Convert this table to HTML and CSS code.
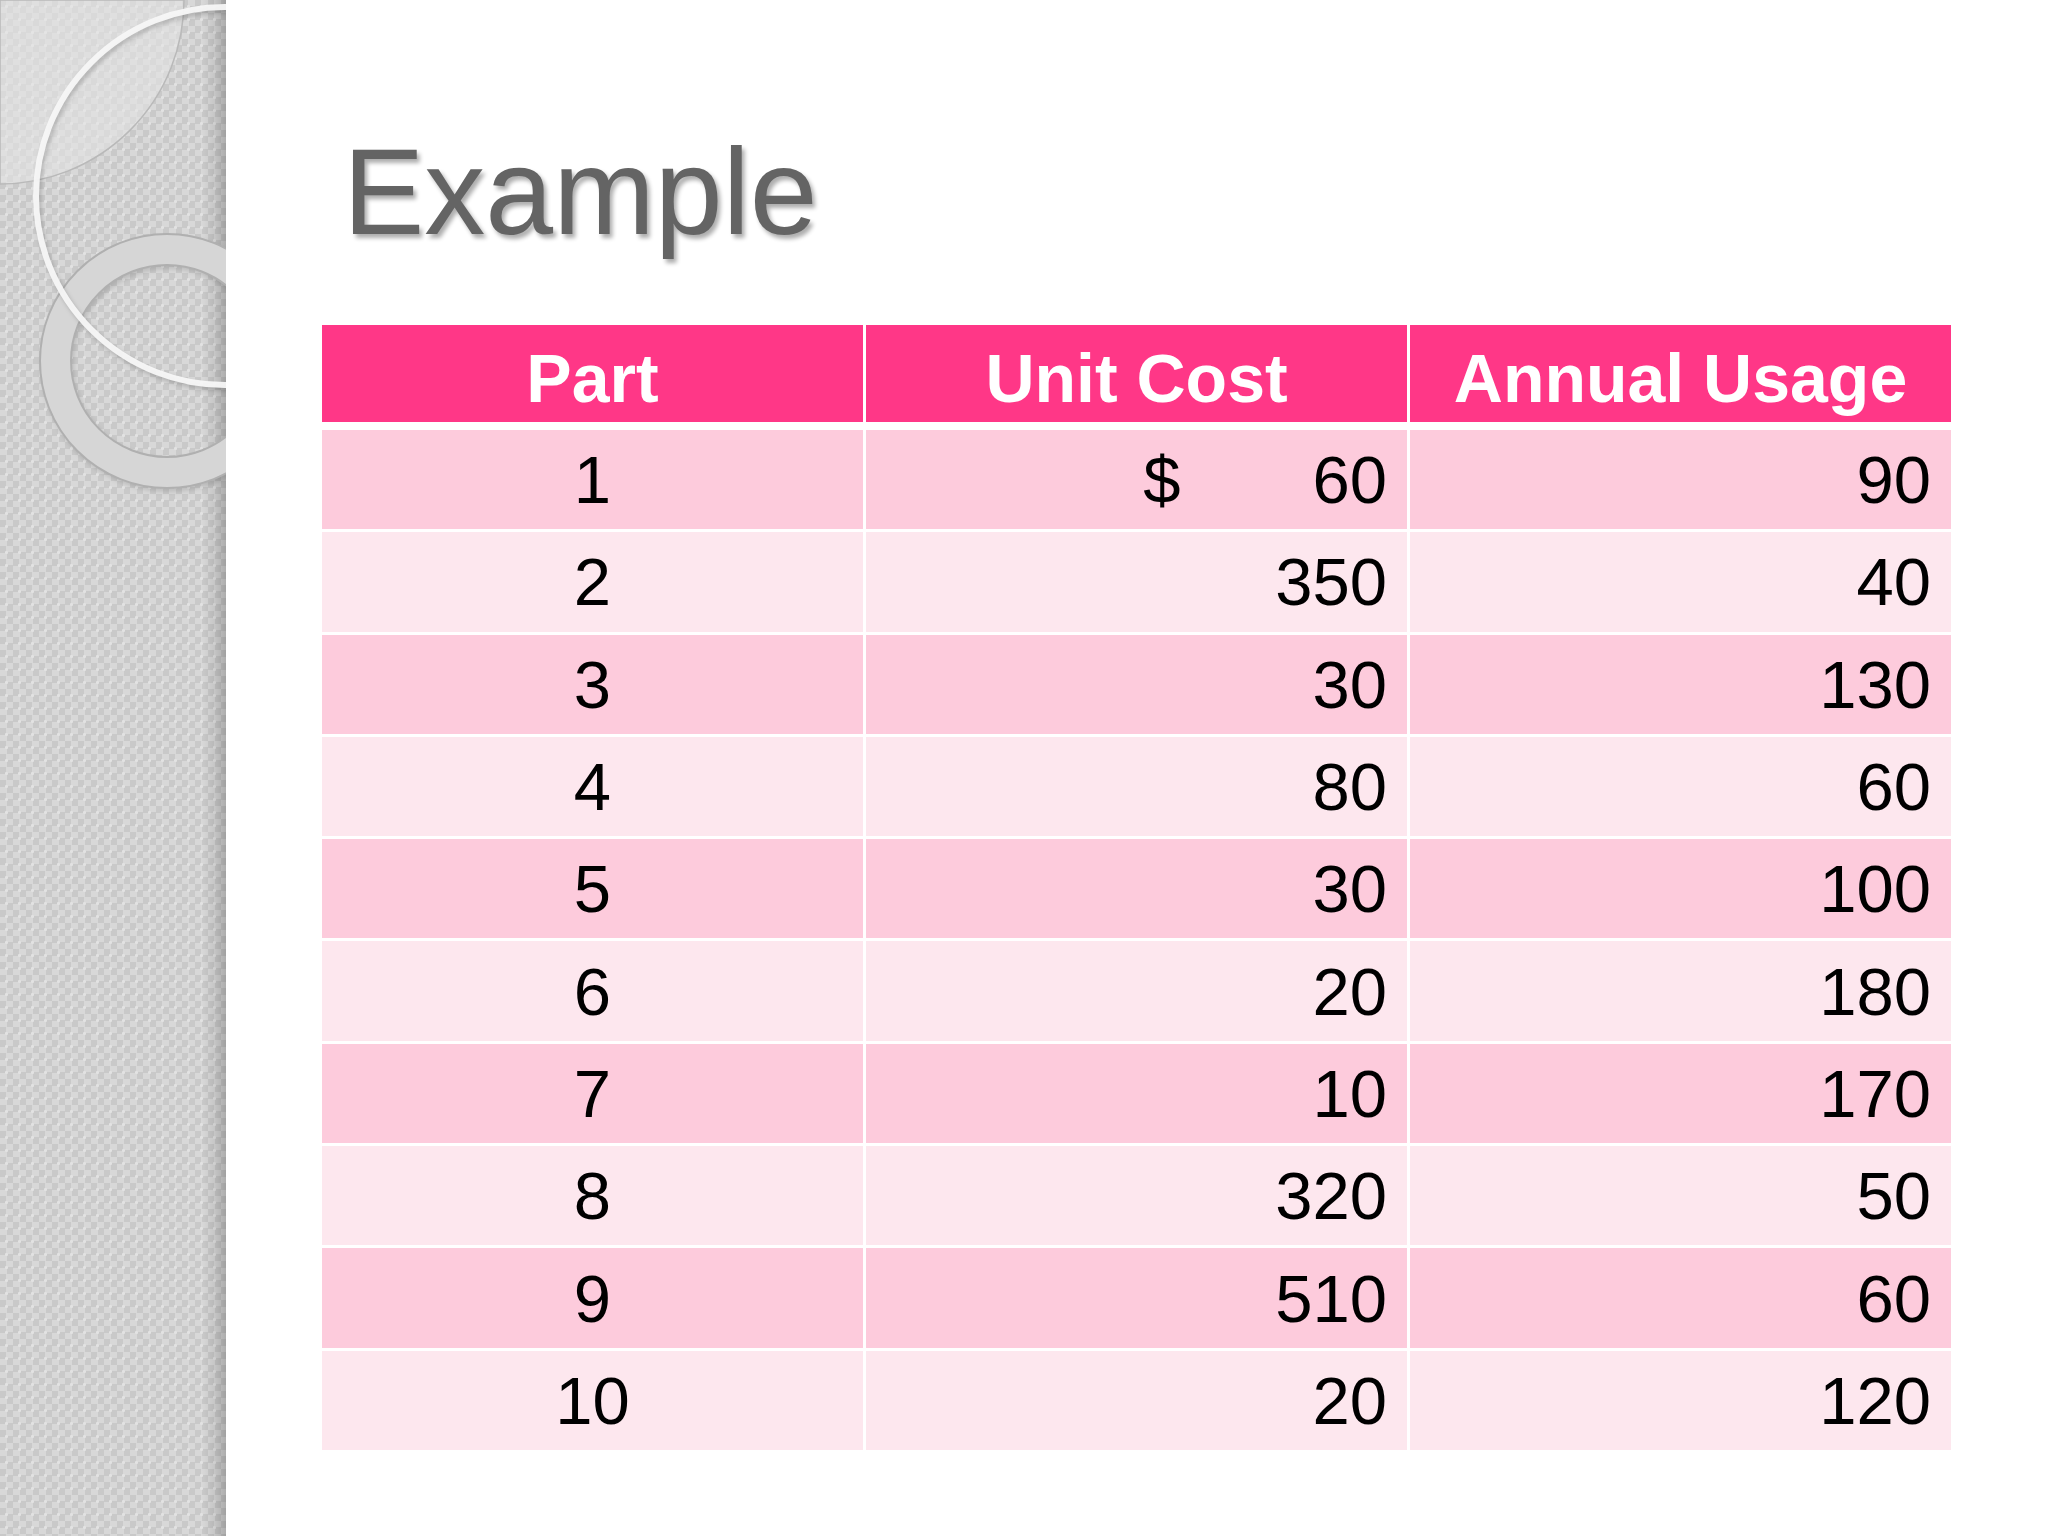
FILE: index.html
```html
<!DOCTYPE html>
<html lang="en">
<head>
<meta charset="utf-8">
<title>Example</title>
<link rel="stylesheet" href="styles.css">
</head>
<body>
<div class="slide">
  <aside class="side">
    <svg class="side-art" width="226" height="560" viewBox="0 0 226 560" aria-hidden="true">
      <defs>
        <filter id="soft" x="-20%" y="-20%" width="140%" height="140%">
          <feGaussianBlur stdDeviation="2"/>
        </filter>
      </defs>
      <path d="M0,0 H184 A184,184 0 0 1 0,184 Z" fill="#e6e6e6" fill-opacity="0.55" stroke="#b9b9b9" stroke-width="1.5"/>
      <circle cx="169" cy="364" r="111.5" fill="none" stroke="#000" stroke-opacity="0.12" stroke-width="33" filter="url(#soft)"/>
      <circle cx="167" cy="361" r="111.5" fill="none" stroke="#d6d6d6" stroke-width="31"/>
      <circle cx="167" cy="361" r="127" fill="none" stroke="#b0b0b0" stroke-width="2"/>
      <circle cx="167" cy="361" r="96" fill="none" stroke="#b0b0b0" stroke-width="2"/>
      <circle cx="227" cy="199" r="189" fill="none" stroke="#000" stroke-opacity="0.18" stroke-width="6" filter="url(#soft)"/>
      <circle cx="225" cy="196" r="189" fill="none" stroke="#f7f7f7" stroke-width="6" stroke-opacity="0.95"/>
    </svg>
  </aside>
  <main class="content">
    <h1 class="title">Example</h1>
    <table class="data">
      <thead>
        <tr><th>Part</th><th>Unit Cost</th><th>Annual Usage</th></tr>
      </thead>
      <tbody>
        <tr><td class="c">1</td><td class="r"><span class="dollar">$</span>60</td><td class="r">90</td></tr>
        <tr><td class="c">2</td><td class="r">350</td><td class="r">40</td></tr>
        <tr><td class="c">3</td><td class="r">30</td><td class="r">130</td></tr>
        <tr><td class="c">4</td><td class="r">80</td><td class="r">60</td></tr>
        <tr><td class="c">5</td><td class="r">30</td><td class="r">100</td></tr>
        <tr><td class="c">6</td><td class="r">20</td><td class="r">180</td></tr>
        <tr><td class="c">7</td><td class="r">10</td><td class="r">170</td></tr>
        <tr><td class="c">8</td><td class="r">320</td><td class="r">50</td></tr>
        <tr><td class="c">9</td><td class="r">510</td><td class="r">60</td></tr>
        <tr><td class="c">10</td><td class="r">20</td><td class="r">120</td></tr>
      </tbody>
    </table>
  </main>
</div>
</body>
</html>
```

FILE: styles.css
```css
html, body {
  margin: 0;
  padding: 0;
  background: #ffffff;
}

.slide {
  width: 2048px;
  height: 1536px;
  display: flex;
  overflow: hidden;
  font-family: "Liberation Sans", Arial, sans-serif;
}

.side {
  position: relative;
  width: 226px;
  flex: 0 0 226px;
  height: 1536px;
  overflow: hidden;
  background-color: #d0d0d0;
  background-image:
    linear-gradient(to right, rgba(0,0,0,0) 202px, rgba(0,0,0,0.07) 213px, rgba(0,0,0,0.2) 226px),
    radial-gradient(circle at 50% 50%, #e2e2e2 0 1.2px, rgba(0,0,0,0) 2px),
    conic-gradient(#d8d8d8 0 25%, #c9c9c9 0 50%, #d8d8d8 0 75%, #c9c9c9 0);
  background-size: 100% 100%, 13px 13px, 13px 13px;
}

.side-art {
  position: absolute;
  left: 0;
  top: 0;
  display: block;
}

.content {
  flex: 1;
  padding-left: 93px;
}

.title {
  margin: 122px 0 0 0;
  padding-left: 24px;
  font-family: "Liberation Sans", Arial, sans-serif;
  font-weight: normal;
  font-size: 122px;
  line-height: 141px;
  height: 141px;
  color: #646464;
  text-shadow: 3px 4px 4px rgba(0,0,0,0.32);
}

.data {
  margin-top: 59px;
  border-collapse: separate;
  border-spacing: 3px;
  table-layout: fixed;
  width: 1635px;
  font-size: 67px;
  color: #000;
}

.data th {
  box-sizing: border-box;
  width: 541px;
  height: 102px;
  padding: 9px 0 0 0;
  border-bottom: 5px solid #ffffff;
  background: #ff3787;
  color: #ffffff;
  font-size: 68px;
  font-weight: bold;
  text-align: center;
  vertical-align: middle;
  line-height: normal;
}

.data td {
  box-sizing: border-box;
  height: 99.3px;
  padding: 0 20px;
  vertical-align: middle;
  line-height: normal;
  white-space: nowrap;
}

.data tbody tr:nth-child(odd) td {
  background: #fdcbdc;
}

.data tbody tr:nth-child(even) td {
  background: #fde7ee;
}

.data td.c {
  text-align: center;
}

.data td.r {
  text-align: right;
}

.dollar {
  display: inline-block;
  margin-right: 132px;
}
```
